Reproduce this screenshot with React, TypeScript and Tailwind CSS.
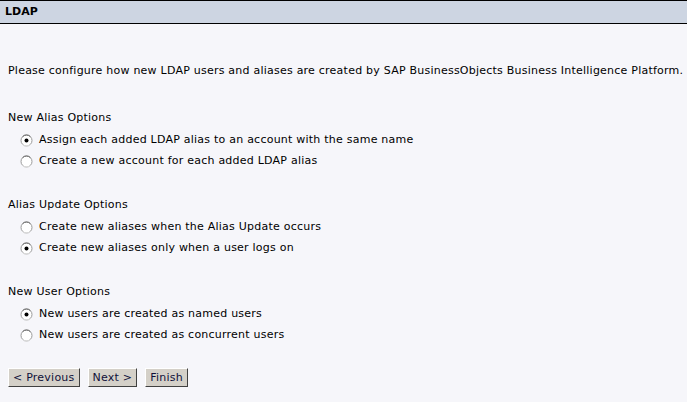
import React from "react";

function Radio({ checked }: { checked: boolean }) {
  return (
    <svg width="13" height="13" viewBox="0 0 13 13" className="shrink-0">
      <circle cx="6.5" cy="6.5" r="5.5" fill="#fff" stroke="#9a9a9a" strokeWidth="1" />
      <path d="M2.6 10.4 A5.5 5.5 0 0 0 10.4 10.4" fill="none" stroke="#e8e8e8" strokeWidth="1" />
      <path d="M2.6 2.6 A5.5 5.5 0 0 1 10.4 2.6" fill="none" stroke="#6a6a6a" strokeWidth="1" />
      {checked && <circle cx="6.5" cy="6.5" r="2" fill="#000" />}
    </svg>
  );
}

function Option({ checked, label }: { checked: boolean; label: string }) {
  return (
    <div className="flex items-center h-[21px] pl-[20px] gap-[6px]">
      <Radio checked={checked} />
      <span>{label}</span>
    </div>
  );
}

function Group({ title, options }: { title: string; options: { label: string; checked: boolean }[] }) {
  return (
    <div className="flex flex-col">
      <div className="h-[23px] flex items-center pl-[8px]">{title}</div>
      {options.map((o) => (
        <Option key={o.label} checked={o.checked} label={o.label} />
      ))}
    </div>
  );
}

function Btn({ children }: { children: React.ReactNode }) {
  return (
    <button className="h-[19px] px-[4px] bg-[#d4d0c8] border border-t-white border-l-white border-r-[#404040] border-b-[#404040] text-[#10103a] leading-none">
      {children}
    </button>
  );
}

export default function App() {
  return (
    <div
      className="w-[687px] h-[402px] bg-[#f6f6fa] text-black text-[11px] tracking-[0.23px] overflow-hidden"
      style={{ fontFamily: '"DejaVu Sans", Verdana, sans-serif' }}
    >
      <div className="h-[24px] bg-[#cdd5e2] border-t border-b border-black flex items-center pl-[5px] font-bold tracking-normal">
        LDAP
      </div>
      <div className="h-[83px] flex items-center pl-[8px] pt-[11px]">
        Please configure how new LDAP users and aliases are created by SAP BusinessObjects Business Intelligence Platform.
      </div>
      <div className="flex flex-col gap-[22px]">
        <Group
          title="New Alias Options"
          options={[
            { label: "Assign each added LDAP alias to an account with the same name", checked: true },
            { label: "Create a new account for each added LDAP alias", checked: false },
          ]}
        />
        <Group
          title="Alias Update Options"
          options={[
            { label: "Create new aliases when the Alias Update occurs", checked: false },
            { label: "Create new aliases only when a user logs on", checked: true },
          ]}
        />
        <Group
          title="New User Options"
          options={[
            { label: "New users are created as named users", checked: true },
            { label: "New users are created as concurrent users", checked: false },
          ]}
        />
      </div>
      <div className="flex gap-[8px] pl-[8px] mt-[22px]">
        <Btn>&lt; Previous</Btn>
        <Btn>Next &gt;</Btn>
        <Btn>Finish</Btn>
      </div>
    </div>
  );
}
